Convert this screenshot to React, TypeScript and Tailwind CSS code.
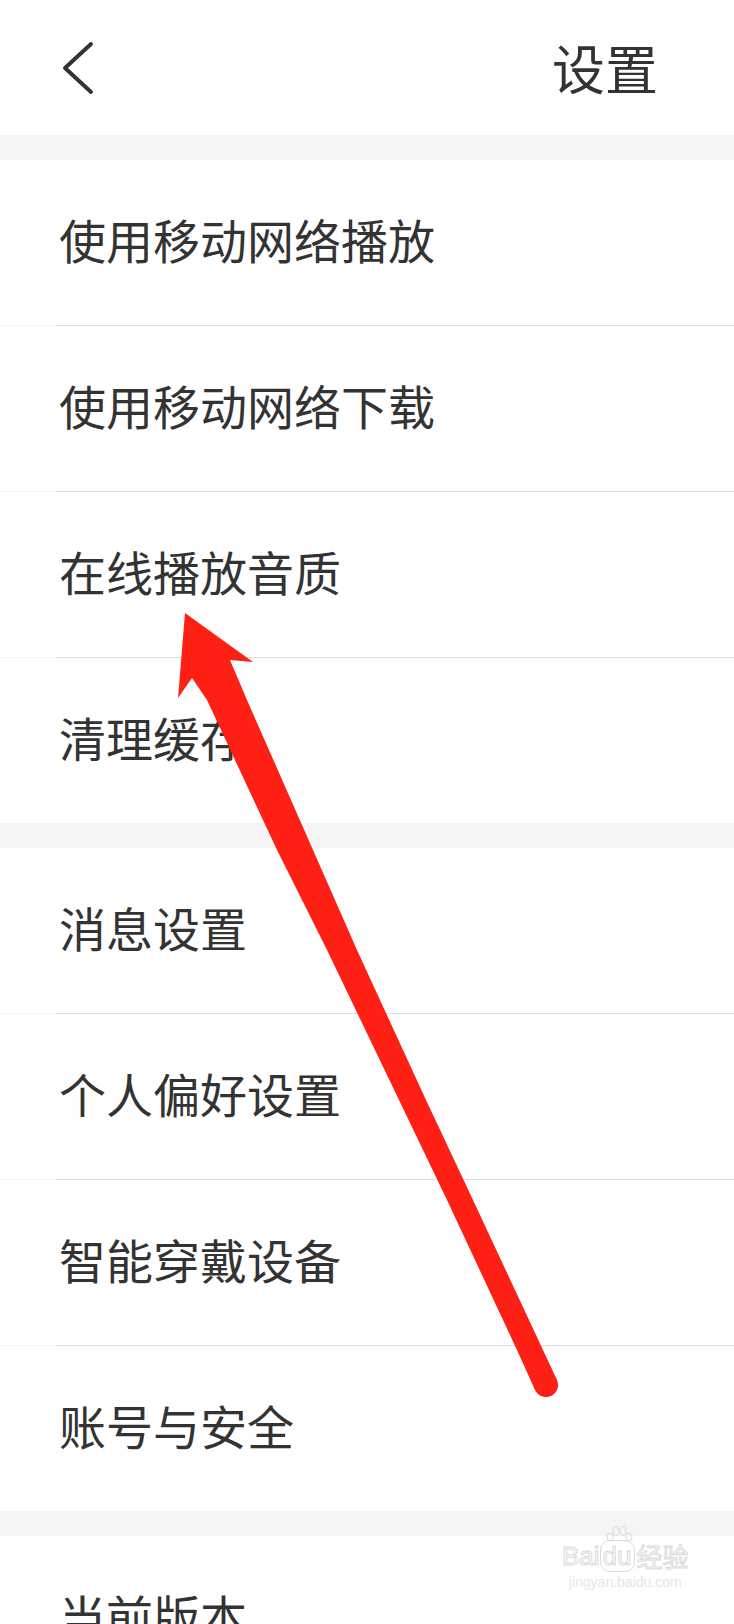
import React from "react";

const sections: string[][] = [
  ["使用移动网络播放", "使用移动网络下载", "在线播放音质", "清理缓存"],
  ["消息设置", "个人偏好设置", "智能穿戴设备", "账号与安全"],
  ["当前版本"],
];

function Row({ label, last }: { label: string; last: boolean }) {
  return (
    <>
      <div className="h-[165px] flex items-center pl-[59px] pb-[8px] text-[47px] text-[#333333] leading-none">
        {label}
      </div>
      {!last && (
        <div className="flex h-px">
          <div className="w-[56px] bg-[#f4f4f4]" />
          <div className="flex-1 bg-[#dddddd]" />
        </div>
      )}
    </>
  );
}

function Arrow() {
  // red annotation arrow drawn over the list
  const d =
    "M185 613 L253 662 L230 660 L247 700 L313 850 L357 950 L426 1100 L473 1200 L543 1350 L557 1380 " +
    "A12 12 0 0 1 535 1390 L517 1350 L447 1200 L399 1100 L327 950 L277 850 L207 700 L192 678 L178 698 Z";
  return (
    <svg
      className="absolute left-0 top-0 pointer-events-none"
      width="734"
      height="1624"
      viewBox="0 0 734 1624"
    >
      <path d={d} fill="#fe2014" />
    </svg>
  );
}

function Watermark() {
  return (
    <div className="absolute left-[562px] top-[1543px] flex flex-col items-center pointer-events-none">
      <div className="flex items-end text-[26px] leading-none text-white [-webkit-text-stroke:1px_#dadada] font-['Liberation_Sans',sans-serif]">
        <span>Bai</span>
        <span className="relative">
          <svg className="absolute -top-[18px] left-[2px]" width="34" height="20" viewBox="0 0 34 20">
            <g fill="none" stroke="#dadada" strokeWidth="1">
              <ellipse cx="8" cy="12" rx="3" ry="4" />
              <ellipse cx="14" cy="6" rx="3" ry="4.5" />
              <ellipse cx="21" cy="6" rx="3" ry="4.5" />
              <ellipse cx="27" cy="12" rx="3" ry="4" />
            </g>
          </svg>
          <span className="border border-[#dadada] rounded-[10px] px-[2px]">du</span>
        </span>
        <span className="font-['Noto_Sans_CJK_SC',sans-serif] ml-[2px]">经验</span>
      </div>
      <div className="mt-[6px] text-[14px] leading-none text-[#e6e6e6] font-['Liberation_Sans',sans-serif]">
        jingyan.baidu.com
      </div>
    </div>
  );
}

export default function App() {
  return (
    <div className="relative w-[734px] h-[1624px] overflow-hidden bg-white font-['Noto_Sans_CJK_SC','Noto_Sans',sans-serif]">
      <div className="h-[135px] flex items-center justify-between pl-[60px] pr-[76px]">
        <svg width="36" height="56" viewBox="0 0 36 56">
          <path
            d="M31 15 L5 39 L31 63"
            transform="translate(0 -11)"
            fill="none"
            stroke="#333333"
            strokeWidth="4"
            strokeLinecap="round"
            strokeLinejoin="round"
          />
        </svg>
        <div className="text-[53px] leading-none text-[#333333]">设置</div>
      </div>
      {sections.map((items, si) => (
        <div key={si}>
          <div className="h-[25px] bg-[#f5f5f5]" />
          {items.map((label, i) => (
            <Row key={label} label={label} last={i === items.length - 1} />
          ))}
        </div>
      ))}
      <Watermark />
      <Arrow />
    </div>
  );
}
